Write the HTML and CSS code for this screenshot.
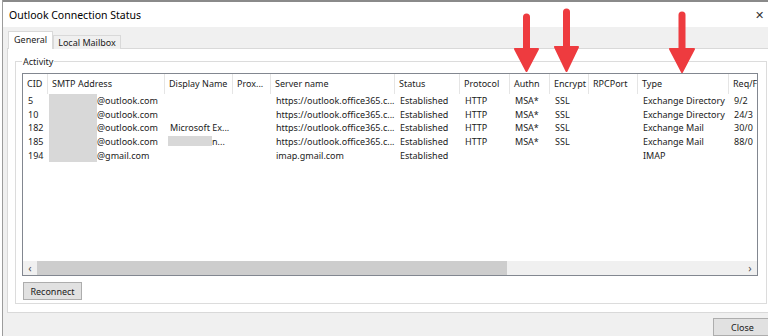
FILE: index.html
```html
<!DOCTYPE html>
<html lang="en">
  <head>
    <meta charset="utf-8" />
    <title>Outlook Connection Status</title>
    <link rel="stylesheet" href="styles.css">
  </head>
  <body>
    <div class="window">
      <div class="window__strip"></div>
      <div class="titlebar">
        <span class="titlebar__title">Outlook Connection Status</span>
        <span class="titlebar__close">&#x2715;</span>
      </div>
      <div class="dialog">
        <div class="tabs">
          <span class="tabs__tab active">General</span>
          <span class="tabs__tab">Local Mailbox</span>
        </div>
        <div class="panel">
          <fieldset class="group">
            <legend class="group__label">Activity</legend>
            <div class="list">
              <div class="list__grid">
                <span class="list__head">CID</span>
                <span class="list__head">SMTP Address</span>
                <span class="list__head">Display Name</span>
                <span class="list__head">Prox...</span>
                <span class="list__head">Server name</span>
                <span class="list__head">Status</span>
                <span class="list__head">Protocol</span>
                <span class="list__head">Authn</span>
                <span class="list__head">Encrypt</span>
                <span class="list__head">RPCPort</span>
                <span class="list__head">Type</span>
                <span class="list__head">Req/Fail</span>

                <span>5</span>
                <span class="list__smtp"><i class="redact"></i>@outlook.com</span>
                <span></span>
                <span></span>
                <span>https://outlook.office365.c...</span>
                <span>Established</span>
                <span>HTTP</span>
                <span>MSA*</span>
                <span>SSL</span>
                <span></span>
                <span>Exchange Directory</span>
                <span>9/2</span>

                <span>10</span>
                <span class="list__smtp"><i class="redact"></i>@outlook.com</span>
                <span></span>
                <span></span>
                <span>https://outlook.office365.c...</span>
                <span>Established</span>
                <span>HTTP</span>
                <span>MSA*</span>
                <span>SSL</span>
                <span></span>
                <span>Exchange Directory</span>
                <span>24/3</span>

                <span>182</span>
                <span class="list__smtp"><i class="redact"></i>@outlook.com</span>
                <span>Microsoft Ex...</span>
                <span></span>
                <span>https://outlook.office365.c...</span>
                <span>Established</span>
                <span>HTTP</span>
                <span>MSA*</span>
                <span>SSL</span>
                <span></span>
                <span>Exchange Mail</span>
                <span>30/0</span>

                <span>185</span>
                <span class="list__smtp"><i class="redact"></i>@outlook.com</span>
                <span><i class="redact redact--small"></i>n...</span>
                <span></span>
                <span>https://outlook.office365.c...</span>
                <span>Established</span>
                <span>HTTP</span>
                <span>MSA*</span>
                <span>SSL</span>
                <span></span>
                <span>Exchange Mail</span>
                <span>88/0</span>

                <span>194</span>
                <span class="list__smtp last"><i class="redact"></i>@gmail.com</span>
                <span></span>
                <span></span>
                <span>imap.gmail.com</span>
                <span>Established</span>
                <span></span>
                <span></span>
                <span></span>
                <span></span>
                <span>IMAP</span>
                <span></span>
              </div>
              <div class="scrollbar">
                <span class="scrollbar__arrow">&lsaquo;</span>
                <span class="scrollbar__thumb"></span>
                <span class="scrollbar__track"></span>
                <span class="scrollbar__arrow">&rsaquo;</span>
              </div>
            </div>
            <button class="btn">Reconnect</button>
          </fieldset>
        </div>
        <div class="footer">
          <button class="btn">Close</button>
        </div>
      </div>

      <!-- annotation arrows drawn over the dialog -->
      <svg class="arrows" width="768" height="336" viewBox="0 0 768 336">
        <g fill="#ee3b3f" stroke="#ee3b3f" stroke-linejoin="round" stroke-linecap="round">
          <line x1="526.5" y1="17" x2="526.5" y2="52" stroke-width="7" />
          <polygon points="515,49 538,49 526.5,71" stroke-width="2" />
          <line x1="566.5" y1="12" x2="566.5" y2="50" stroke-width="7" />
          <polygon points="555,47 578,47 566.5,71" stroke-width="2" />
          <line x1="682" y1="15" x2="682" y2="52" stroke-width="7" />
          <polygon points="670,49 694,49 682,72" stroke-width="2" />
        </g>
      </svg>
    </div>
  </body>
</html>
```

FILE: styles.css
```css
* {
	box-sizing: border-box;
}

body {
	margin: 0;
	width: 768px;
	height: 336px;
	overflow: hidden;
	background: #ffffff;
	font-family: "Noto Sans", "Open Sans", sans-serif;
	font-size: 9px;
	color: #1b1b1b;
}

.window {
	position: relative;
	width: 768px;
	height: 336px;
	margin-left: 2px;
	border-left: 1px solid #9c9c9c;
	display: flex;
	flex-direction: column;
}

.window__strip {
	height: 2px;
	background: #8a8a8a;
}

.titlebar {
	height: 25px;
	background: #ffffff;
	display: flex;
	align-items: center;
	justify-content: space-between;
	padding: 0 8px 0 6px;
}

.titlebar__title {
	font-size: 10.5px;
	color: #000000;
}

.titlebar__close {
	font-size: 11px;
	color: #333333;
	margin-right: -2px;
}

.dialog {
	flex: 1;
	background: #f0f0f0;
	display: flex;
	flex-direction: column;
}

.tabs {
	height: 21px;
	display: flex;
	align-items: flex-end;
	padding-left: 5px;
}

.tabs__tab {
	height: 14px;
	padding: 0 4px;
	line-height: 13px;
	background: #f0f0f0;
	border: 1px solid #d9d9d9;
	border-bottom: none;
	margin-bottom: -1px;
	position: relative;
	z-index: 1;

	&.active {
		height: 18px;
		line-height: 16px;
		background: #ffffff;
		padding: 0 5px;
	}
}

.panel {
	height: 265px;
	margin-left: 4px;
	width: 770px;
	background: #ffffff;
	border: 1px solid #d9d9d9;
	padding: 6px 0 0 7px;
}

.group {
	margin: 0;
	width: 752px;
	height: 249px;
	border: 1px solid #dcdcdc;
	padding: 0 0 0 6px;
	display: flex;
	flex-direction: column;
}

.group__label {
	padding: 0 1px;
	margin-left: 0;
	line-height: 13px;
	font-size: 9px;
}

.list {
	margin-top: 5px;
	width: 736px;
	height: 203px;
	border: 1px solid #828790;
	display: flex;
	flex-direction: column;
	overflow: hidden;
}

.list__grid {
	flex: 1;
	display: grid;
	grid-template-columns: 25px 117px 68px 38px 124px 65px 50px 40px 39px 49px 91px 60px;
	grid-template-rows: 20px;
	grid-auto-rows: 13.7px;
	align-content: start;

	span {
		padding-left: 5px;
		white-space: nowrap;
		overflow: hidden;
		line-height: 13.7px;
	}
}

.list__head {
	line-height: 20px !important;
	border-right: 1px solid #e5e5e5;
	padding-left: 4px !important;
}

.list__smtp {
	padding-left: 1px !important;
	display: flex;

	&.last .redact {
		height: 17px;
	}
}

.redact {
	display: inline-block;
	width: 48px;
	height: 13.7px;
	background: #d8d8d8;
	flex: none;

	&.redact--small {
		width: 44px;
		height: 10px;
		vertical-align: -1px;
		margin-left: -2px;
	}
}

.scrollbar {
	height: 14px;
	display: flex;
	background: #f0f0f0;
}

.scrollbar__arrow {
	width: 14px;
	text-align: center;
	line-height: 13px;
	font-size: 11px;
	color: #555555;
}

.scrollbar__thumb {
	width: 470px;
	background: #cdcdcd;
}

.scrollbar__track {
	flex: 1;
}

.btn {
	font-family: inherit;
	font-size: 9px;
	color: #1b1b1b;
	width: 59px;
	height: 18px;
	padding: 0;
	background: #e1e1e1;
	border: 1px solid #adadad;
	border-radius: 0;
}

.group .btn {
	margin-top: 6px;
	margin-left: 1px;
}

.footer {
	display: flex;
	justify-content: flex-end;
	padding-top: 5px;
	margin-right: -2px;
}

.arrows {
	position: absolute;
	top: 0;
	left: -3px;
	pointer-events: none;
}
```
